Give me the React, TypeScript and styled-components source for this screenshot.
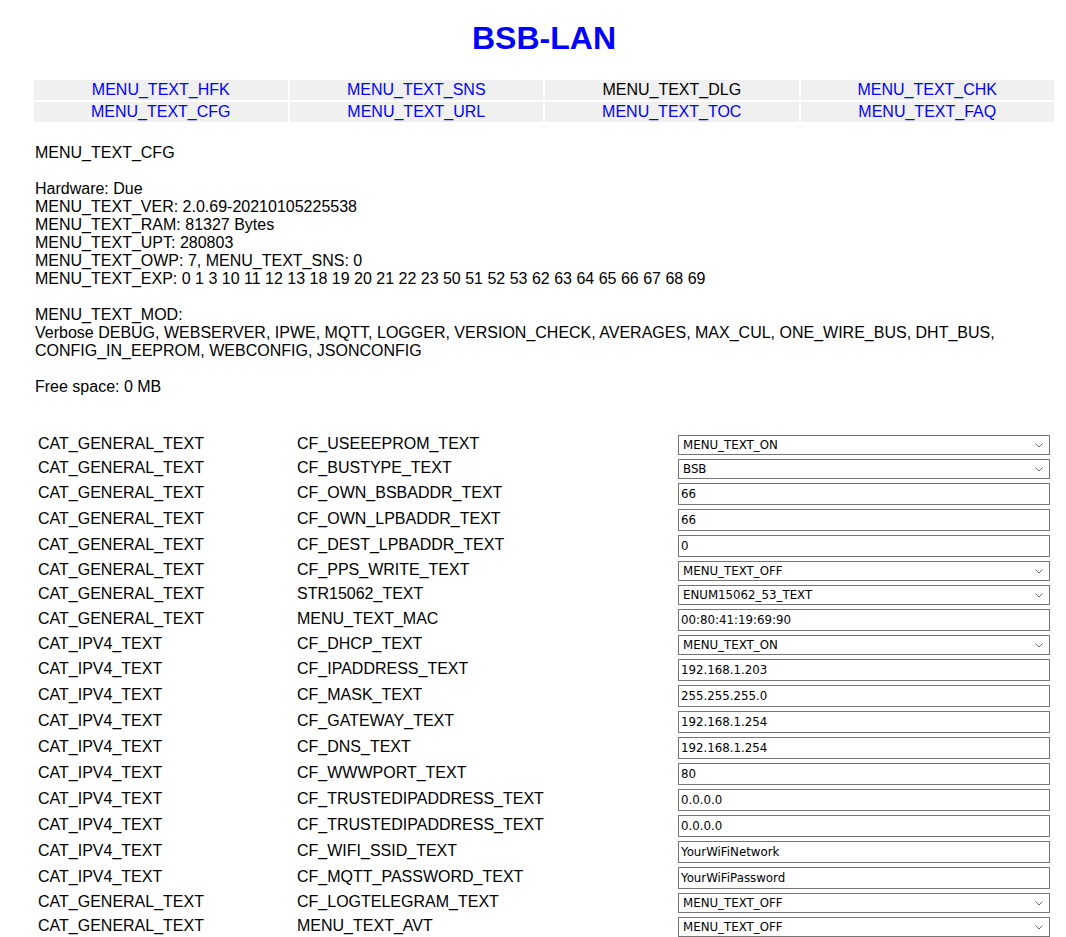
import React from 'react';
import styled, { createGlobalStyle } from 'styled-components';

const GlobalStyle = createGlobalStyle`
  html, body {
    margin: 0;
    padding: 0;
    background: #ffffff;
  }
  body {
    font-family: "Liberation Sans", Arial, sans-serif;
    font-size: 16px;
    color: #000;
  }
`;

/* page wrapper */
const Page = styled.div`
  width: 1024px;
  margin-left: 32px;
  padding-top: 20px;
  padding-bottom: 8px;
`;

const Title = styled.h1`
  margin: 0 0 21px;
  text-align: center;
  font-size: 32px;
  line-height: 37px;
  font-weight: 700;
  color: #0000ff;
`;

/* top menu */
const NavGrid = styled.div`
  display: grid;
  grid-template-columns: repeat(4, 1fr);
  gap: 2px;
  padding: 2px;
`;

const NavCell = styled.a<{ $current?: boolean }>`
  display: block;
  background: #f0f0f0;
  text-align: center;
  padding: 1px 0;
  line-height: 18px;
  text-decoration: none;
  color: ${({ $current }) => ($current ? '#000' : '#0000ff')};
  cursor: ${({ $current }) => ($current ? 'default' : 'pointer')};
`;

/* info text block */
const Info = styled.div`
  margin-top: 20px;
  padding-left: 3px;
  line-height: 18px;
`;

const Line = styled.div<{ $gap?: boolean }>`
  margin-top: ${({ $gap }) => ($gap ? '18px' : '0')};
`;

/* settings table */
const ConfigGrid = styled.div`
  margin-top: 37px;
  display: grid;
  grid-template-columns: 257px 380px 379px;
  column-gap: 2px;
  row-gap: 2px;
  padding: 1px 2px;
  align-items: center;
`;

const Cell = styled.div`
  padding: 0 3px 3px 4px;
  line-height: 18px;
  white-space: nowrap;
`;

const FieldCell = styled.div`
  padding: 1px 4px 1px 3px;
  display: flex;
  align-items: center;
`;

const controlFont = `
  font-family: "DejaVu Sans", Tahoma, sans-serif;
  font-size: 11.8px;
  color: #000;
`;

const TextInput = styled.input`
  ${controlFont}
  box-sizing: border-box;
  width: 100%;
  height: 22px;
  padding: 0 2px;
  border: 1px solid #767676;
  border-radius: 0;
  background: #fff;
  outline: none;
`;

const SelectWrap = styled.div`
  position: relative;
  width: 100%;
`;

const Select = styled.select`
  ${controlFont}
  appearance: none;
  -webkit-appearance: none;
  box-sizing: border-box;
  width: 100%;
  height: 20px;
  padding: 0 20px 0 4px;
  border: 1px solid #767676;
  border-radius: 0;
  background: #fff;
  outline: none;
`;

const Chevron = styled.svg`
  position: absolute;
  right: 7px;
  top: 8px;
  width: 8px;
  height: 5px;
  pointer-events: none;
`;

type Row = {
  cat: string;
  name: string;
  value: string;
  kind: 'select' | 'input';
};

const rows: Row[] = [
  { cat: 'CAT_GENERAL_TEXT', name: 'CF_USEEEPROM_TEXT', value: 'MENU_TEXT_ON', kind: 'select' },
  { cat: 'CAT_GENERAL_TEXT', name: 'CF_BUSTYPE_TEXT', value: 'BSB', kind: 'select' },
  { cat: 'CAT_GENERAL_TEXT', name: 'CF_OWN_BSBADDR_TEXT', value: '66', kind: 'input' },
  { cat: 'CAT_GENERAL_TEXT', name: 'CF_OWN_LPBADDR_TEXT', value: '66', kind: 'input' },
  { cat: 'CAT_GENERAL_TEXT', name: 'CF_DEST_LPBADDR_TEXT', value: '0', kind: 'input' },
  { cat: 'CAT_GENERAL_TEXT', name: 'CF_PPS_WRITE_TEXT', value: 'MENU_TEXT_OFF', kind: 'select' },
  { cat: 'CAT_GENERAL_TEXT', name: 'STR15062_TEXT', value: 'ENUM15062_53_TEXT', kind: 'select' },
  { cat: 'CAT_GENERAL_TEXT', name: 'MENU_TEXT_MAC', value: '00:80:41:19:69:90', kind: 'input' },
  { cat: 'CAT_IPV4_TEXT', name: 'CF_DHCP_TEXT', value: 'MENU_TEXT_ON', kind: 'select' },
  { cat: 'CAT_IPV4_TEXT', name: 'CF_IPADDRESS_TEXT', value: '192.168.1.203', kind: 'input' },
  { cat: 'CAT_IPV4_TEXT', name: 'CF_MASK_TEXT', value: '255.255.255.0', kind: 'input' },
  { cat: 'CAT_IPV4_TEXT', name: 'CF_GATEWAY_TEXT', value: '192.168.1.254', kind: 'input' },
  { cat: 'CAT_IPV4_TEXT', name: 'CF_DNS_TEXT', value: '192.168.1.254', kind: 'input' },
  { cat: 'CAT_IPV4_TEXT', name: 'CF_WWWPORT_TEXT', value: '80', kind: 'input' },
  { cat: 'CAT_IPV4_TEXT', name: 'CF_TRUSTEDIPADDRESS_TEXT', value: '0.0.0.0', kind: 'input' },
  { cat: 'CAT_IPV4_TEXT', name: 'CF_TRUSTEDIPADDRESS_TEXT', value: '0.0.0.0', kind: 'input' },
  { cat: 'CAT_IPV4_TEXT', name: 'CF_WIFI_SSID_TEXT', value: 'YourWiFiNetwork', kind: 'input' },
  { cat: 'CAT_IPV4_TEXT', name: 'CF_MQTT_PASSWORD_TEXT', value: 'YourWiFiPassword', kind: 'input' },
  { cat: 'CAT_GENERAL_TEXT', name: 'CF_LOGTELEGRAM_TEXT', value: 'MENU_TEXT_OFF', kind: 'select' },
  { cat: 'CAT_GENERAL_TEXT', name: 'MENU_TEXT_AVT', value: 'MENU_TEXT_OFF', kind: 'select' },
];

const menu = [
  'MENU_TEXT_HFK', 'MENU_TEXT_SNS', 'MENU_TEXT_DLG', 'MENU_TEXT_CHK',
  'MENU_TEXT_CFG', 'MENU_TEXT_URL', 'MENU_TEXT_TOC', 'MENU_TEXT_FAQ',
];

function Field({ row }: { row: Row }) {
  if (row.kind === 'input') {
    return <TextInput type="text" defaultValue={row.value} />;
  }
  return (
    <SelectWrap>
      <Select defaultValue={row.value}>
        <option value={row.value}>{row.value}</option>
      </Select>
      <Chevron viewBox="0 0 8 5">
        <path d="M0.5 0.5 L4 4 L7.5 0.5" fill="none" stroke="#6d6d6d" strokeWidth="1" />
      </Chevron>
    </SelectWrap>
  );
}

export default function App() {
  return (
    <>
      <GlobalStyle />
      <Page>
        <Title>BSB-LAN</Title>
        <NavGrid>
          {menu.map((m) => (
            <NavCell key={m} $current={m === 'MENU_TEXT_DLG'}>{m}</NavCell>
          ))}
        </NavGrid>

        <Info>
          <Line>MENU_TEXT_CFG</Line>
          <Line $gap>Hardware: Due</Line>
          <Line>MENU_TEXT_VER: 2.0.69-20210105225538</Line>
          <Line>MENU_TEXT_RAM: 81327 Bytes</Line>
          <Line>MENU_TEXT_UPT: 280803</Line>
          <Line>MENU_TEXT_OWP: 7, MENU_TEXT_SNS: 0</Line>
          <Line>MENU_TEXT_EXP: 0 1 3 10 11 12 13 18 19 20 21 22 23 50 51 52 53 62 63 64 65 66 67 68 69</Line>
          <Line $gap>MENU_TEXT_MOD:</Line>
          <Line>Verbose DEBUG, WEBSERVER, IPWE, MQTT, LOGGER, VERSION_CHECK, AVERAGES, MAX_CUL, ONE_WIRE_BUS, DHT_BUS,</Line>
          <Line>CONFIG_IN_EEPROM, WEBCONFIG, JSONCONFIG</Line>
          <Line $gap>Free space: 0 MB</Line>
        </Info>

        <ConfigGrid>
          {rows.map((r, i) => (
            <React.Fragment key={i}>
              <Cell>{r.cat}</Cell>
              <Cell>{r.name}</Cell>
              <FieldCell>
                <Field row={r} />
              </FieldCell>
            </React.Fragment>
          ))}
        </ConfigGrid>
      </Page>
    </>
  );
}
